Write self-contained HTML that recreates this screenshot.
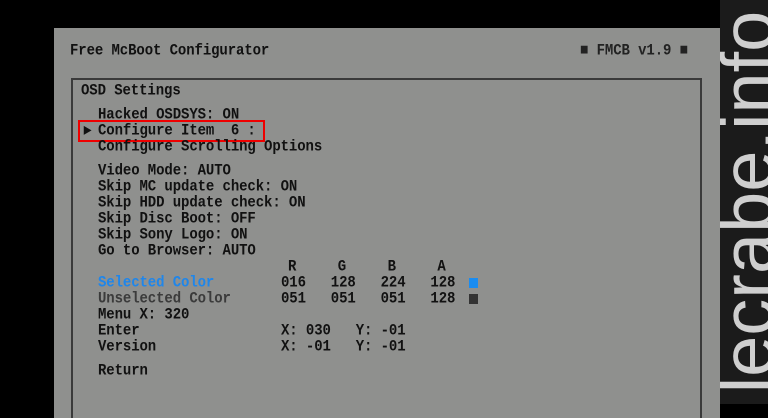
<!DOCTYPE html>
<html><head><style>
html,body{margin:0;padding:0;}
body{width:768px;height:404px;background:#000;position:relative;overflow:hidden;font-family:"Liberation Mono",monospace;}
#panel{position:absolute;left:54px;top:28px;width:666px;height:390px;background:#8f908e;}
#inner{position:absolute;left:71px;top:78px;width:631px;height:340px;border:2px solid #3a3a3a;border-bottom:none;box-sizing:border-box;}
.t{position:absolute;font-size:14px;line-height:16px;height:16px;color:#111;white-space:pre;transform:scaleY(1.15);transform-origin:left center;font-weight:bold;letter-spacing:-0.1px;}
#wm{position:absolute;right:0;top:0;width:48px;height:404px;background:#1b1b1b;overflow:hidden;}
#wm span{position:absolute;left:58%;top:50%;transform:translate(-50%,-50%) rotate(-90deg);font-family:"Liberation Sans",sans-serif;font-size:74px;color:#cfcfcf;white-space:nowrap;}
.sq{position:absolute;width:9px;height:10px;}
</style></head><body>
<div id="panel"></div>
<div id="inner"></div>
<div class="t" style="left:70px;top:43px">Free McBoot Configurator</div>
<div class="t" style="left:580px;top:43px;color:#222">■ FMCB v1.9 ■</div>
<div class="t" style="left:81px;top:83px">OSD Settings</div>
<div class="t" style="left:98px;top:107px">Hacked OSDSYS: ON</div>
<div class="t" style="left:84px;top:123px">▸</div>
<div class="t" style="left:98px;top:123px">Configure Item  6 :</div>
<div style="position:absolute;left:78px;top:120px;width:187px;height:22px;border:2px solid #e00;box-sizing:border-box;"></div>
<div class="t" style="left:98px;top:139px">Configure Scrolling Options</div>
<div class="t" style="left:98px;top:163px">Video Mode: AUTO</div>
<div class="t" style="left:98px;top:179px">Skip MC update check: ON</div>
<div class="t" style="left:98px;top:195px">Skip HDD update check: ON</div>
<div class="t" style="left:98px;top:211px">Skip Disc Boot: OFF</div>
<div class="t" style="left:98px;top:227px">Skip Sony Logo: ON</div>
<div class="t" style="left:98px;top:243px">Go to Browser: AUTO</div>
<div class="t" style="left:288px;top:259px">R     G     B     A</div>
<div class="t" style="left:98px;top:275px;color:#1f86ea">Selected Color</div>
<div class="t" style="left:98px;top:291px;color:#3b3b3b">Unselected Color</div>
<div class="t" style="left:281px;top:275px">016   128   224   128</div>
<div class="t" style="left:281px;top:291px">051   051   051   128</div>
<div class="sq" style="left:469px;top:278px;background:#1a8cf0"></div>
<div class="sq" style="left:469px;top:294px;background:#333"></div>
<div class="t" style="left:98px;top:307px">Menu X: 320</div>
<div class="t" style="left:98px;top:323px">Enter</div>
<div class="t" style="left:98px;top:339px">Version</div>
<div class="t" style="left:281px;top:323px">X: 030   Y: -01</div>
<div class="t" style="left:281px;top:339px">X: -01   Y: -01</div>
<div class="t" style="left:98px;top:363px">Return</div>
<div id="wm"><span>lecrabe.info</span></div>
</body></html>
